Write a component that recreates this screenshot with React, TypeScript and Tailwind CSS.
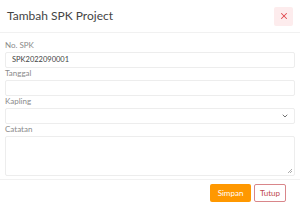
import { ChevronDown, X } from "lucide-react";

function Label({ children }: { children: React.ReactNode }) {
  return <label className="block h-[11px] text-[8px] leading-[11px] text-[#8a8a8a]">{children}</label>;
}

export default function App() {
  return (
    <div
      className="w-[300px] h-[215px] bg-white overflow-hidden"
      style={{ fontFamily: "Lato, 'Open Sans', sans-serif" }}
    >
      {/* Header */}
      <div className="flex items-center justify-between h-[33px] pl-[7px] pr-[7px] border-b border-[#f1f1f1]">
        <h1 className="text-[12px] text-[#444]">Tambah SPK Project</h1>
        <button className="w-[19px] h-[19px] flex items-center justify-center bg-[#fdeced] rounded-[2px] text-[#e0494f]">
          <X size={10} strokeWidth={2.5} />
        </button>
      </div>

      {/* Body */}
      <div className="px-[5px] pt-[7px] flex flex-col">
        <Label>No. SPK</Label>
        <div className="mt-[1px] h-[16px] border border-[#ededed] rounded-[2px] flex items-center px-[6px] text-[7.5px] text-[#444]">
          SPK2022090001
        </div>
        <Label>Tanggal</Label>
        <div className="mt-[1px] h-[16px] border border-[#ededed] rounded-[2px]" />
        <Label>Kapling</Label>
        <div className="mt-[1px] h-[16px] border border-[#ededed] rounded-[2px] flex items-center justify-end pr-[5px] text-[#555]">
          <ChevronDown size={8} strokeWidth={2.5} />
        </div>
        <Label>Catatan</Label>
        <div className="mt-[1px] h-[40px] border border-[#ededed] rounded-[2px] relative">
          <svg className="absolute right-[1px] bottom-[1px]" width="6" height="6" viewBox="0 0 6 6">
            <path d="M1 5 L5 1 M3 5 L5 3" stroke="#999" strokeWidth="0.8" />
          </svg>
        </div>
      </div>

      {/* Footer */}
      <div className="mt-[3px] border-t border-[#f1f1f1] flex justify-end gap-[3px] pt-[4px] pr-[14px]">
        <button className="h-[18px] w-[41px] bg-[#ff9800] text-white text-[8px] rounded-[2px]">Simpan</button>
        <button className="h-[18px] w-[32px] border border-[#d9868a] text-[#c0474d] text-[8px] rounded-[2px]">Tutup</button>
      </div>
    </div>
  );
}
